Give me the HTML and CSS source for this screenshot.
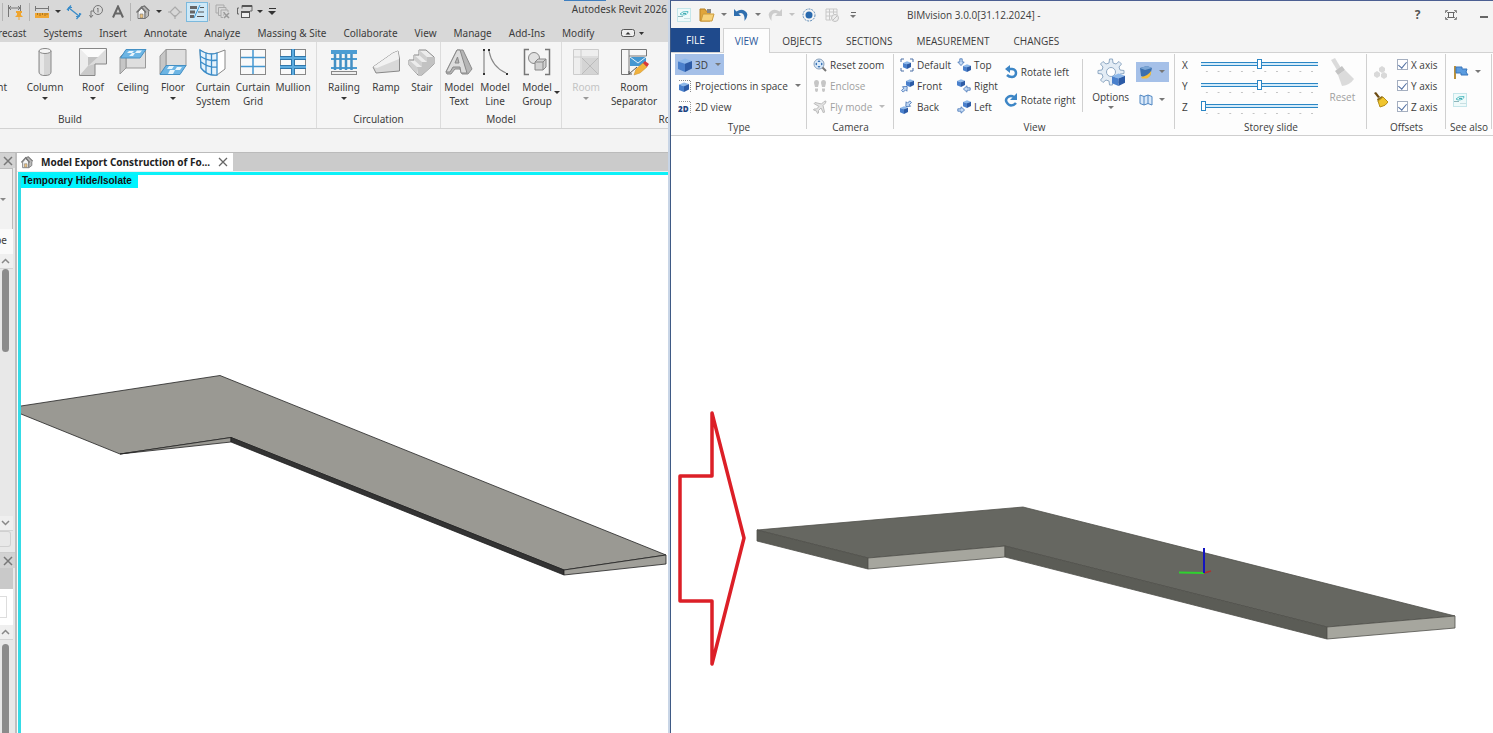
FILE: index.html
```html
<!DOCTYPE html>
<html lang="en">
<head>
    <meta charset="UTF-8">
    <meta name="viewport" content="width=device-width, initial-scale=1.0">
    <title>Revit to BIMvision</title>
    <link rel="stylesheet" href="styles.css">
</head>
<body>
    <svg class="defs" aria-hidden="true">
        <symbol id="cube" viewBox="0 0 12 12">
            <path d="M0 3L6 0.500L12 2.500L6 5Z" fill="#8db8ea"/>
            <path d="M0 3L6 5V12L0 9.500Z" fill="#4a80cc"/>
            <path d="M12 2.500L6 5V12L12 9Z" fill="#2c5ba6"/>
        </symbol>
        <symbol id="arr" viewBox="0 0 10 10">
            <path d="M1 3.500H5V1L9.500 5L5 9V6.500H1Z" fill="#c4daf5" stroke="#4473b5"/>
        </symbol>
        <symbol id="broom" viewBox="0 0 24 28">
            <path d="M1 2L5 0L11 10L7 12Z" fill="currentColor" opacity="0.600"/>
            <path d="M5 13L12 8L15 12L8 17Z" fill="currentColor"/>
            <path d="M8 17L15 12L24 21Q20 27 12 28Z" fill="currentColor" opacity="0.600"/>
        </symbol>
        <symbol id="logo" viewBox="0 0 14 14">
            <rect x="0.500" y="0.500" width="13" height="13" fill="#effafa" stroke="#c5e6ea"/>
            <path d="M3 6Q5 3 11 3.500Q11 7 5 7Z" fill="none" stroke="#59c0c6"/>
            <path d="M1 8.500H6" stroke="#8fb5ba"/>
            <path d="M7 10.500H13" stroke="#c9dfe2"/>
            <path d="M6 5.500H9" stroke="#4ba9b0"/>
        </symbol>
        <symbol id="house" viewBox="0 0 16 16">
            <path d="M3 8V14.500H10V8L6.500 4Z" fill="#f4f4f4" stroke="#777"/>
            <path d="M10 14.500L13.500 12V7L10 8Z" fill="#bbb" stroke="#777"/>
            <path d="M6.500 3L9.500 2L14.500 7L11 8.500Z" fill="#b5b5b5"/>
            <path d="M1.500 8.500L6.500 3L11 8.500M6.500 3L9.500 2L14.500 7" fill="none" stroke="#707070" stroke-width="1.200"/>
            <path d="M5 14V10H8V14Z" fill="#eec37e" stroke="#777" stroke-width="0.600"/>
        </symbol>
    </svg>

    <main class="screens">
        <!-- Revit -->
        <section class="revit">
            <header class="revit-title">
                <div class="qat">
                    <span class="sep"></span>
                    <button class="tool spaced" aria-label="Align dimension"><svg width="16" height="16" viewBox="0 0 16 16"><path d="M1.500 1V13M13.500 1V7M2 4H13M4 2L2 4L4 6M11 2L13 4L11 6" fill="none" stroke="#777"/><path d="M9 7H15V9H14V11L16 13H8L10 11V9H9ZM11.500 13H12.500V16H11.500Z" fill="#efa52f"/></svg></button>
                    <span class="sep"></span>
                    <button class="tool" aria-label="Measure"><svg width="16" height="14" viewBox="0 0 16 14"><path d="M1 3.500H15M1.500 1V6M14.500 1V6" stroke="#777"/><rect x="1" y="8" width="14" height="5" fill="#f0a632"/><path d="M3.500 8V10M6 8V11M8.500 8V10M11 8V11M13 8V10" stroke="#a8751f"/></svg></button>
                    <button class="drop" aria-label="Measure options"></button>
                    <button class="tool" aria-label="Aligned dimension"><svg width="16" height="16" viewBox="0 0 16 16"><path d="M3 4L13 12M1 6L5 1.500M10.500 15L15 9.500" stroke="#3a8cc9" stroke-width="1.300"/><path d="M2.500 3.500H6M2.500 3.500V7M13.500 12.500H10M13.500 12.500V9" stroke="#3a8cc9"/></svg></button>
                    <button class="tool" aria-label="Tag by category"><svg width="16" height="16" viewBox="0 0 16 16"><circle cx="10" cy="6" r="4.500" fill="none" stroke="#777"/><path d="M9 5L10 4V8.500M6 7H3V13M1.500 11L3 13.500L5 11" fill="none" stroke="#777"/></svg></button>
                    <button class="tool" aria-label="Text"><svg width="12" height="14" viewBox="0 0 12 14"><path d="M1 12.500L6 1.500L11 12.500M3 8.500H9" fill="none" stroke="#666" stroke-width="2"/></svg></button>
                    <span class="sep"></span>
                    <button class="tool" aria-label="Default 3D view"><svg width="16" height="16"><use href="#house"/></svg></button>
                    <button class="drop" aria-label="3D view options"></button>
                    <button class="tool" aria-label="Section"><svg width="14" height="14" viewBox="0 0 14 14"><path d="M7 2L12 7L7 12L2 7ZM0 7H2M12 7H14M7 10V14" fill="none" stroke="#aaa" stroke-width="1.200"/></svg></button>
                    <button class="tool active" aria-label="Thin lines"><svg width="16" height="14" viewBox="0 0 16 14"><path d="M1 2.500H8M1 7H6M1 11.500H5" stroke="#666" stroke-width="3"/><path d="M11 2.500H15M9 7H15M8 11.500H15" stroke="#555"/><path d="M5 13L11 0" stroke="#3a9ad9"/></svg></button>
                    <span class="sep"></span>
                    <button class="tool" aria-label="Close inactive views"><svg width="15" height="15" viewBox="0 0 15 15"><path d="M9 3V1H1V9H3M11 6V3.500H3.500V11.500H6M8 13.500H6V6H13V8M8 8.500H10M8 11H9" fill="none" stroke="#aaa"/><path d="M9 9L14 14M14 9L9 14" stroke="#999" stroke-width="1.500"/></svg></button>
                    <button class="tool" aria-label="Switch windows"><svg width="17" height="16" viewBox="0 0 17 16"><path d="M6 4.500V1.500H16V7H14M3 4H1.500V10H3" fill="none" stroke="#666"/><path d="M6 2H16" stroke="#555" stroke-width="2"/><rect x="5.500" y="7.500" width="8" height="6" fill="#eee" stroke="#555"/><path d="M5 8H14" stroke="#555" stroke-width="2"/></svg></button>
                    <button class="drop" aria-label="Windows list"></button>
                    <button class="drop custom" aria-label="Customize toolbar"></button>
                </div>
                <span class="revit-name">Autodesk Revit 2026</span>
            </header>
            <nav class="revit-tabs">
                <a href="#">Precast</a>
                <a href="#">Systems</a>
                <a href="#">Insert</a>
                <a href="#">Annotate</a>
                <a href="#">Analyze</a>
                <a href="#">Massing &amp; Site</a>
                <a href="#">Collaborate</a>
                <a href="#">View</a>
                <a href="#">Manage</a>
                <a href="#">Add-Ins</a>
                <a href="#">Modify</a>
                <button class="minimize" aria-label="Minimize ribbon"><svg width="24" height="9" viewBox="0 0 24 9"><rect x="0.500" y="0.500" width="13" height="7" rx="2" fill="#eee" stroke="#555"/><path d="M4.500 5.500L7 3L9.500 5.500Z" fill="#333"/><path d="M18 3H23L20.500 6Z" fill="#333"/></svg></button>
            </nav>

            <div class="revit-ribbon">
                <div class="panel">
                    <div class="panel-tools">
                        <button class="big stub">nt</button>
                        <button class="big wide has-drop"><svg width="32" height="32" viewBox="0 0 32 32"><path d="M10 5V26Q10 29.500 16 29.500T22 26V5" fill="#d4d4d4" stroke="#888"/><path d="M11 6H15V29Q11 28 11 26Z" fill="#e8e8e8"/><ellipse cx="16" cy="5" rx="6" ry="2.500" fill="#f5f5f5" stroke="#888"/></svg>Column</button>
                        <button class="big has-drop"><svg width="32" height="32" viewBox="0 0 32 32"><path d="M2.500 2.500H29.500V18H18V29.500H2.500Z" fill="#dcdcdc"/><path d="M3 3L11 11V20L3 29Z" fill="#ececec"/><path d="M11 11H21L11 20Z" fill="#c2c2c2"/><path d="M11 20L18 18V29H3Z" fill="#c9c9c9"/><path d="M3 3H29L21 11H11Z" fill="#fbfbfb"/><path d="M2.500 2.500H29.500V18H18V29.500H2.500Z" fill="none" stroke="#888"/></svg>Roof</button>
                        <button class="big"><svg width="32" height="32" viewBox="0 0 32 32"><path d="M9 4H28.500V22H9Z" fill="#dedede" stroke="#999"/><path d="M3 11L9 5V22L3 28Z" fill="#c6c6c6" stroke="#999"/><path d="M9 3.500H29L23 12H3.500Z" fill="#6db5e4" stroke="#4490c4"/><path d="M12 5H17L15 7H10ZM20 4.500H25L23 7H18ZM15 7H18L16 10H12Z" fill="#e9f5fc"/></svg>Ceiling</button>
                        <button class="big has-drop"><svg width="32" height="32" viewBox="0 0 32 32"><path d="M9 3.500H29V20H9Z" fill="#dedede" stroke="#999"/><path d="M9 3.500L3 10V28L9 20Z" fill="#c6c6c6" stroke="#999"/><path d="M9 19.500H29L23 28.500H3Z" fill="#6db5e4" stroke="#4490c4"/><path d="M12 20H17L15 23H10ZM20 21H25L23 24H18ZM13 24H18L16 28H11Z" fill="#e9f5fc"/></svg>Floor</button>
                        <button class="big"><svg width="32" height="32" viewBox="0 0 32 32"><path d="M3 4Q12 10 20 7L28 4V23L20 29Q10 30 4 22Z" fill="#fff" stroke="#888"/><path d="M3 4Q12 10 20 7V29Q10 30 4 22Z" fill="#e5f2fb"/><path d="M3 4Q12 10 20 7V29Q10 30 4 22ZM3 10Q12 16 20 14M4 16Q12 22 20 21M9 7V26M14.500 8V28.500" fill="none" stroke="#3a8cc9" stroke-width="1.300"/></svg>Curtain
System</button>
                        <button class="big"><svg width="32" height="32" viewBox="0 0 32 32"><rect x="3.500" y="3.500" width="25" height="25" fill="#f9f9f9" stroke="#888"/><path d="M4 11.500H28M4 20.500H28M16 4V28" stroke="#4497d1" stroke-width="1.500"/></svg>Curtain
Grid</button>
                        <button class="big"><svg width="32" height="32" viewBox="0 0 32 32"><rect x="3.500" y="3.500" width="25" height="25" fill="#f9f9f9" stroke="#888"/><path d="M3 12H29M3 21H29M16 3V29" stroke="#2f77ac" stroke-width="4"/><path d="M3 12H29M3 21H29M16 3V29" stroke="#5eacdf" stroke-width="2"/></svg>Mullion</button>
                    </div>
                    <div class="panel-name build-name">Build</div>
                </div>
                <div class="panel">
                    <div class="panel-tools padded">
                        <button class="big mid has-drop"><svg width="32" height="32" viewBox="0 0 32 32"><path d="M3 4H29V8H3ZM3 12H29V14H3ZM3 21H29V23H3Z" fill="#4d9dd3"/><path d="M7 8V24M12.500 8V24M18 8V24M23.500 8V24" stroke="#4490c4" stroke-width="2.500"/><rect x="3.500" y="25.500" width="25" height="3" fill="#eee" stroke="#888"/></svg>Railing</button>
                        <button class="big slim"><svg width="32" height="32" viewBox="0 0 32 32"><path d="M3 21L23 7L28 5L29.500 13V25L6 27Z" fill="#d8d8d8" stroke="#888"/><path d="M3 21L23 7L28 5L29 13L7 22Z" fill="#f2f2f2"/></svg>Ramp</button>
                        <button class="big slim"><svg width="32" height="32" viewBox="0 0 32 32"><path d="M3 14H8V9H13V4H20L28 11V18L16 29H12L3 19Z" fill="#ececec" stroke="#888"/><path d="M3 14L11 21V28L3 19ZM8 9L16 16V21L8 14ZM13 4L21 11V16L13 9Z" fill="#cfcfcf"/><path d="M11 21H16V16H21V11H28V18L16 29H12Z" fill="#c2c2c2"/></svg>Stair</button>
                    </div>
                    <div class="panel-name">Circulation</div>
                </div>
                <div class="panel">
                    <div class="panel-tools">
                        <button class="big slim"><svg width="32" height="32" viewBox="0 0 32 32"><path d="M3 26L14 4H20L29 23L25 28H19L17 23H12L8 28H4Z" fill="#b5b5b5" stroke="#8c8c8c"/><path d="M3 26L14 4H17L24 27H18L17 21H10L7 26ZM12 17H16L14.500 11Z" fill="#dcdcdc" stroke="#888" fill-rule="evenodd"/></svg>Model
Text</button>
                        <button class="big slim"><svg width="32" height="32" viewBox="0 0 32 32"><path d="M5 5V27M10 5Q13 21 27 27" fill="none" stroke="#888" stroke-width="1.200"/><path d="M4 3H6V5H4ZM4 27H6V29H4ZM9 3H11V5H9ZM27 27H29V29H27Z" fill="#333"/></svg>Model
Line</button>
                        <button class="big mid side-drop"><svg width="32" height="32" viewBox="0 0 32 32"><path d="M8 3.500H3.500V28.500H8M24 3.500H28.500V28.500H24" fill="none" stroke="#777" stroke-width="1.500"/><circle cx="13" cy="12" r="5.500" fill="#e2e2e2" stroke="#888"/><path d="M14 16L17 13H25V21L22 24H14Z" fill="#d2d2d2" stroke="#888"/><path d="M14 16H22V24M22 16L25 13" fill="none" stroke="#888"/></svg>Model
Group</button>
                    </div>
                    <div class="panel-name">Model</div>
                </div>
                <div class="panel room-panel">
                    <div class="panel-tools">
                        <button class="big mid has-drop" disabled><svg width="32" height="32" viewBox="0 0 32 32"><path d="M3.500 3.500H28.500V28.500H3.500ZM11 4V28M4 11H28" fill="#eee" stroke="#ccc"/><path d="M12 12H28V28H12Z" fill="#d4d4d4"/><path d="M12 12L28 28M28 12L12 28" stroke="#bbb"/></svg>Room</button>
                        <button class="big mid"><svg width="32" height="32" viewBox="0 0 32 32"><path d="M3.500 3.500H28.500V10H11V28.500H3.500Z" fill="#f7f7f7" stroke="#777"/><path d="M11 4V10" stroke="#777"/><path d="M12 11H28V20H12Z" fill="#4497d1"/><path d="M12 11L20 17L28 11" fill="none" stroke="#e4f2fb"/><path d="M11 28L19 21M11 28V25M11 28H14" stroke="#555"/><path d="M16 29L18 23L25 17L29 21L22 27Z" fill="#f1b23c" stroke="#c98f2b" stroke-width="0.500"/><path d="M25 17L27 15L31 18L29 21Z" fill="#da3636"/></svg>Room
Separator</button>
                    </div>
                    <div class="panel-name">Room &amp; Area</div>
                </div>
            </div>
            <div class="options-bar"></div>

            <div class="workspace">
                <aside class="dock">
                    <div class="dock-head"><button aria-label="Close properties"><svg width="10" height="10" viewBox="0 0 10 10"><path d="M1 1L9 9M9 1L1 9" stroke="#777" stroke-width="1.500"/></svg></button></div>
                    <div class="type-box"><button class="drop" aria-label="Type selector"></button></div>
                    <div class="type-edit">pe</div>
                    <button class="scroll-btn" aria-label="Scroll up"><svg width="9" height="6" viewBox="0 0 9 6"><path d="M1 5L4.500 1.500L8 5" fill="none" stroke="#888" stroke-width="1.500"/></svg></button>
                    <div class="track"><div class="thumb short"></div></div>
                    <button class="scroll-btn" aria-label="Scroll down"><svg width="9" height="6" viewBox="0 0 9 6"><path d="M1 1L4.500 4.500L8 1" fill="none" stroke="#888" stroke-width="1.500"/></svg></button>
                    <div class="apply"><span></span></div>
                    <div class="dock-head"><button aria-label="Close browser"><svg width="10" height="10" viewBox="0 0 10 10"><path d="M1 1L9 9M9 1L1 9" stroke="#777" stroke-width="1.500"/></svg></button></div>
                    <div class="browser-bar"></div>
                    <div class="search"><input type="text" aria-label="Search"></div>
                    <button class="scroll-btn" aria-label="Scroll up"><svg width="9" height="6" viewBox="0 0 9 6"><path d="M1 5L4.500 1.500L8 5" fill="none" stroke="#888" stroke-width="1.500"/></svg></button>
                    <div class="track low"><div class="thumb"></div></div>
                </aside>
                <div class="views">
                    <div class="doc-tabs">
                        <div class="doc-tab">
                            <svg width="14" height="14" viewBox="0 0 16 16"><use href="#house" width="16" height="16"/></svg>
                            <span>Model Export Construction of Fo...</span>
                            <button aria-label="Close tab"><svg width="10" height="10" viewBox="0 0 10 10"><path d="M1 1L9 9M9 1L1 9" stroke="#666" stroke-width="1.300"/></svg></button>
                        </div>
                    </div>
                    <div class="view">
                        <span class="hide-label">Temporary Hide/Isolate</span>
                        <svg class="scene" viewBox="21 175 647 558">
                            <g stroke="#222" stroke-width="0.800" stroke-linejoin="round">
                                <path d="M21 406L220 375.500L666 555L564 570L231 437.500L120 454L21 414" fill="#9a9993"/>
                                <path d="M120 454L231 437.500V442Z" fill="#9a9993"/>
                                <path d="M231 437.500L564 570V575L231 442Z" fill="#333"/>
                                <path d="M564 570L666 555V564L564 575Z" fill="#a09f99"/>
                            </g>
                        </svg>
                    </div>
                </div>
            </div>
        </section>

        <!-- BIMvision -->
        <section class="bim">
            <header class="bim-title">
                <div class="bim-qat">
                    <button class="tool" aria-label="BIMvision"><svg width="14" height="14"><use href="#logo"/></svg></button>
                    <button class="tool" aria-label="Open"><svg width="16" height="16" viewBox="0 0 16 16"><path d="M1 14V2H6L7 4H11V14Z" fill="#e0a53a" stroke="#b88227"/><path d="M8 2H12V6H8Z" fill="#888"/><path d="M4 7H15L13 14H2Z" fill="#f7d27a" stroke="#cc9a3b"/></svg></button>
                    <button class="drop" aria-label="Recent files"></button>
                    <button class="tool" aria-label="Undo"><svg width="16" height="14" viewBox="0 0 16 14"><path d="M1 1V8H8L5.500 5.500Q12 3 11.500 13Q17 6 12 3Q8 0.500 3.500 3.500Z" fill="#2f6eae"/></svg></button>
                    <button class="drop" aria-label="Undo list"></button>
                    <button class="tool" aria-label="Redo" disabled><svg width="16" height="14" viewBox="0 0 16 14"><path d="M15 1V8H8L10.500 5.500Q4 3 4.500 13Q-1 6 4 3Q8 0.500 12.500 3.500Z" fill="#ccc"/></svg></button>
                    <button class="drop faint" aria-label="Redo list" disabled></button>
                    <button class="tool" aria-label="Select"><svg width="14" height="14" viewBox="0 0 14 14"><circle cx="7" cy="7" r="6" fill="none" stroke="#5a88b5" stroke-dasharray="2 1"/><circle cx="7" cy="7" r="3.500" fill="#2969ae"/></svg></button>
                    <button class="tool" aria-label="Table" disabled><svg width="14" height="14" viewBox="0 0 14 14"><path d="M1 1H12V7M6 12H1V1M1 4H12M1 8H7M4.500 1V12M8.500 1V6" fill="none" stroke="#c8c8c8"/><circle cx="10" cy="10" r="3.500" fill="#eee" stroke="#c0c0c0"/><path d="M8 12L12 8" stroke="#c0c0c0"/></svg></button>
                    <button class="drop custom" aria-label="Customize toolbar"></button>
                </div>
                <h1>BIMvision 3.0.0[31.12.2024] -</h1>
                <div class="win-buttons">
                    <button aria-label="Help"><b>?</b></button>
                    <button aria-label="Full screen"><svg width="12" height="10" viewBox="0 0 12 10"><path d="M0.500 3V0.500H3M9 0.500H11.500V3M11.500 7V9.500H9M3 9.500H0.500V7M1 1L3 3M11 1L9 3M11 9L9 7M1 9L3 7" fill="none" stroke="#888"/><rect x="3.500" y="2.500" width="5" height="5" fill="none" stroke="#666"/></svg></button>
                    <button aria-label="Minimize"><svg width="8" height="10" viewBox="0 0 8 10"><path d="M0 7H8" stroke="#666" stroke-width="2"/></svg></button>
                </div>
            </header>
            <nav class="bim-tabs">
                <a class="file" href="#">FILE</a>
                <a class="current" href="#">VIEW</a>
                <a href="#">OBJECTS</a>
                <a href="#">SECTIONS</a>
                <a href="#">MEASUREMENT</a>
                <a href="#">CHANGES</a>
            </nav>

            <div class="bim-ribbon">
                <div class="group type">
                    <div class="tools">
                        <div class="rows">
                            <button class="cmd on"><svg width="14" height="14"><use href="#cube"/></svg>3D<i class="caret"></i></button>
                            <button class="cmd"><svg width="14" height="14" viewBox="0 0 14 14"><path d="M1 1.500H13M12.500 2V14" stroke="#888" stroke-dasharray="1 1"/><use href="#cube" x="1" y="3" width="10" height="10"/></svg>Projections in space<i class="caret"></i></button>
                            <button class="cmd"><svg width="14" height="14" viewBox="0 0 14 14"><path d="M1 1.500H13M12.500 2V14" stroke="#999" stroke-dasharray="1 1"/><text x="0" y="12" font-size="8" font-weight="800" fill="#1f4583">2D</text></svg>2D view</button>
                        </div>
                    </div>
                    <div class="group-name">Type</div>
                </div>
                <div class="group camera">
                    <div class="tools">
                        <div class="rows">
                            <button class="cmd"><svg width="14" height="14" viewBox="0 0 14 14"><circle cx="6" cy="6" r="5" fill="#d9e9f8" stroke="#8aa0ba"/><path d="M6 2L7.500 4H4.500ZM6 10L7.500 8H4.500ZM2 6L4 4.500V7.500ZM10 6L8 4.500V7.500Z" fill="#356fb5"/><path d="M9.500 9.500L13 13" stroke="#777" stroke-width="2"/></svg>Reset zoom</button>
                            <button class="cmd" disabled><svg width="14" height="14" viewBox="0 0 14 14"><path d="M1 4Q1 1 3.500 1T6 4L5 8H2ZM8 4Q8 1 10.500 1T13 4L12 8H9ZM2 9.500H5V11Q5 13 3.500 13T2 11ZM9 9.500H12V11Q12 13 10.500 13T9 11Z" fill="#c6c6c6"/></svg>Enclose</button>
                            <button class="cmd" disabled><svg width="14" height="14" viewBox="0 0 14 14"><path d="M13 1L11 1.500L8.500 4L2 2.500L1 3.500L6 6.500L3.500 9H1L0.500 10L3.500 11L4.500 13.500L5.500 13V10.500L8 8L10.500 13L11.500 12L10 5.500L12.500 3Z" fill="#e4e4e4" stroke="#bbb"/></svg>Fly mode<i class="caret"></i></button>
                        </div>
                    </div>
                    <div class="group-name">Camera</div>
                </div>
                <div class="group view-group">
                    <div class="tools">
                        <div class="rows">
                            <button class="cmd"><svg width="14" height="14" viewBox="0 0 14 14"><path d="M1 4V1H4M10 1H13V4M13 10V13H10M4 13H1V10" fill="none" stroke="#4a6fa5"/><use href="#cube" x="3" y="3" width="8" height="8"/></svg>Default</button>
                            <button class="cmd"><svg width="14" height="14" viewBox="0 0 14 14"><use href="#cube" x="6" y="0" width="8" height="8"/><use href="#arr" width="8" height="8" transform="translate(-1 10) rotate(-45)"/></svg>Front</button>
                            <button class="cmd"><svg width="14" height="14" viewBox="0 0 14 14"><use href="#cube" x="0" y="6" width="8" height="8"/><use href="#arr" width="8" height="8" transform="translate(14 4) rotate(135)"/></svg>Back</button>
                        </div>
                        <div class="rows">
                            <button class="cmd"><svg width="14" height="14" viewBox="0 0 14 14"><use href="#cube" x="6" y="6" width="8" height="8"/><use href="#arr" width="8" height="8" transform="translate(8 0) rotate(90)"/></svg>Top</button>
                            <button class="cmd"><svg width="14" height="14" viewBox="0 0 14 14"><use href="#cube" x="0" y="0" width="8" height="8"/><use href="#arr" width="8" height="8" transform="translate(14 14) rotate(180)"/></svg>Right</button>
                            <button class="cmd"><svg width="14" height="14" viewBox="0 0 14 14"><use href="#cube" x="6" y="0" width="8" height="8"/><use href="#arr" x="0" y="6" width="8" height="8"/></svg>Left</button>
                        </div>
                        <div class="rows pair rotates">
                            <button class="cmd"><svg width="14" height="14" viewBox="0 0 14 14"><path d="M3 4H8Q12 4.500 12 8T8 12Q5 12 3 10" fill="none" stroke="#3d86c6" stroke-width="2.500"/><path d="M6 0V8L1 4Z" fill="#3d86c6"/></svg>Rotate left</button>
                            <button class="cmd"><svg width="14" height="14" viewBox="0 0 14 14"><path d="M10 4Q7 2 4 4T2.500 9T7 12.500Q10 12.500 12 10" fill="none" stroke="#3d86c6" stroke-width="2.500"/><path d="M13 0V7H6Z" fill="#3d86c6"/></svg>Rotate right</button>
                        </div>
                        <span class="rule"></span>
                        <button class="options"><svg width="28" height="28" viewBox="0 0 28 28"><path d="M12.500 1H15.500L16 5L19 6L22 3.500L24.500 6L22 9L23 12L27 12.500V15.500L23 16L22 19L24.500 22L22 24.500L19 22L16 23L15.500 27H12.500L12 23L9 22L6 24.500L3.500 22L6 19L5 16L1 15.500V12.500L5 12L6 9L3.500 6L6 3.500L9 6L12 5Z" fill="#e3ecf5" stroke="#8fa9c4"/><circle cx="14" cy="14" r="4.500" fill="#fff" stroke="#8fa9c4"/><use href="#cube" x="15" y="15" width="13" height="13"/></svg>Options<i class="caret"></i></button>
                        <div class="rows pair">
                            <button class="cmd on icon-cmd" aria-label="Shading"><svg width="14" height="14" viewBox="0 0 14 14"><path d="M1 3L8 1L13 3L11 11L6 13L2 11Z" fill="#3a6fae"/><path d="M1 3L8 1L13 3L6 5Z" fill="#7ba5d4"/><path d="M2 12Q9 11 12 6Q13 11 8 13.500H3Z" fill="#f2bd3c"/></svg><i class="caret"></i></button>
                            <button class="cmd icon-cmd" aria-label="Map"><svg width="14" height="12" viewBox="0 0 14 12"><path d="M1 1L5 2.500L9 1L13 2.500V11L9 9.500L5 11L1 9.500ZM5 2.500V11M9 1V9.500" fill="#dceafa" stroke="#4f86c2"/></svg><i class="caret"></i></button>
                        </div>
                    </div>
                    <div class="group-name">View</div>
                </div>
                <div class="group storey">
                    <div class="tools">
                        <div class="rows sliders">
                            <div class="slide"><label for="sx">X</label><span><input id="sx" type="range" min="0" max="100" value="50"></span></div>
                            <div class="slide"><label for="sy">Y</label><span><input id="sy" type="range" min="0" max="100" value="50"></span></div>
                            <div class="slide"><label for="sz">Z</label><span><input id="sz" type="range" min="0" max="100" value="0"></span></div>
                        </div>
                        <button class="options" disabled><svg class="faded" width="24" height="28"><use href="#broom"/></svg>Reset</button>
                    </div>
                    <div class="group-name">Storey slide</div>
                </div>
                <div class="group offsets">
                    <div class="tools">
                        <div class="rows pair">
                            <button class="cmd" aria-label="Explode" disabled><svg width="14" height="14" viewBox="0 0 14 14"><path d="M5 3L8 1L11 3V6L8 8L5 6ZM0 8L3 6L6 8V11L3 13L0 11ZM7 9L10 7L13 9V12L10 14L7 12Z" fill="#d9d9d9"/></svg></button>
                            <button class="cmd" aria-label="Clear offsets"><svg width="14" height="16" viewBox="0 0 14 16"><path d="M0 1L2 0L6 5L4 6Z" fill="#6b4a12"/><path d="M3 7L8 4L10 6L4 10Z" fill="#8a6a1a"/><path d="M4 9L9 5L14 10Q12 14 6 15Z" fill="#f0c52e" stroke="#b58f1c"/></svg></button>
                        </div>
                        <div class="rows checks">
                            <label class="check"><input type="checkbox" checked>X axis</label>
                            <label class="check"><input type="checkbox" checked>Y axis</label>
                            <label class="check"><input type="checkbox" checked>Z axis</label>
                        </div>
                    </div>
                    <div class="group-name">Offsets</div>
                </div>
                <div class="group also">
                    <div class="tools">
                        <div class="rows pair">
                            <button class="cmd icon-cmd" aria-label="Language"><svg width="16" height="14" viewBox="0 0 16 14"><path d="M1 1H3V14H1Z" fill="#b9903b"/><path d="M3 2H9V4H14L13 7L15 10H8V8H3Z" fill="#5b9ce0" stroke="#3a76bb"/></svg><i class="caret"></i></button>
                            <button class="cmd" aria-label="Website"><svg width="14" height="14"><use href="#logo"/></svg></button>
                        </div>
                    </div>
                    <div class="group-name">See also</div>
                </div>
            </div>

            <div class="canvas">
                <svg class="scene" viewBox="671 136 822 597">
                    <g stroke="#50514b" stroke-width="0.800" stroke-linejoin="round">
                        <path d="M757 530L1023 507L1455 616L1327 627L1005 546L868 558Z" fill="#666761"/>
                        <path d="M757 530L868 558V569L757 541Z" fill="#5b5c56"/>
                        <path d="M868 558L1005 546V557L868 569Z" fill="#a6a69e"/>
                        <path d="M1005 546L1327 627V639L1005 557Z" fill="#5b5c56"/>
                        <path d="M1327 627L1455 616V628L1327 639Z" fill="#a6a69e"/>
                    </g>
                    <g stroke-width="2">
                        <path d="M1204 573L1211 571" stroke="#b03030" stroke-width="1.500"/>
                        <path d="M1179 572.500L1204 573" stroke="#2fd12f"/>
                        <path d="M1204 548V573" stroke="#1414c0"/>
                    </g>
                    <path d="M680 476H712V413L744 538L712 664V601H680Z" fill="none" stroke="#dc1f27" stroke-width="3.500" stroke-linejoin="round"/>
                </svg>
            </div>
        </section>
    </main>
</body>
</html>
```
FILE: styles.css
```css
* { box-sizing: border-box; }
body { margin: 0; font-family: "Noto Sans", "Open Sans", sans-serif; font-size: 10px; line-height: 14px; color: #3c3c3c; background: white; }
button { font: inherit; color: inherit; background: none; border: none; padding: 0; margin: 0; white-space: pre; }
a { color: inherit; text-decoration: none; white-space: nowrap; }
svg { display: block; flex-shrink: 0; }
.defs { position: absolute; width: 0; height: 0; }
.screens { display: grid; grid-template-columns: 670fr 823fr; height: 100vh; overflow: hidden; }
.scene { width: 100%; height: 100%; }

/* shared small toolbar buttons */
.tool { width: 22px; height: 20px; display: flex; justify-content: center; align-items: center; flex-shrink: 0; }
.drop { width: 10px; height: 20px; display: flex; justify-content: center; align-items: center; flex-shrink: 0; }
.drop::before { content: ""; border: 3px solid transparent; border-top-color: #333; border-bottom: none; }
.custom { flex-direction: column; }
.custom::before { order: 2; border-width: 4px; }
.custom::after { content: ""; width: 7px; height: 1px; margin-bottom: 2px; background: #333; }
.sep { width: 1px; height: 18px; margin: 0 1px; background: #b5b5b5; flex-shrink: 0; }
.spaced { margin-right: 2px; }

/* Revit */
.revit { display: flex; flex-direction: column; min-width: 0; overflow: hidden; border-right: 2px solid #c8d5e6; }
.revit-title { height: 24px; display: flex; justify-content: space-between; background: linear-gradient(#3f7fc0, #3f7fc0) calc(100% - 62px) 0 / 42px 1px no-repeat, #d8d8d8; flex-shrink: 0; }
.qat { height: 23px; display: flex; align-items: center; padding-left: 1px; }
.active { background: #cde8f7; border: 1px solid #7cb9dd; }
.qat .custom { margin-left: 2px; }
.revit-name { padding: 2px 1px 0 3px; white-space: nowrap; }
.revit-tabs { height: 18px; display: flex; gap: 17px; background: #d8d8d8; flex-shrink: 0; line-height: 18px; }
.revit-tabs a:first-child { margin-left: -8px; }
.minimize { margin-left: 10px; display: flex; align-items: center; }
.revit-ribbon { height: 87px; display: flex; background: #f5f5f5; border-bottom: 1px solid #d2d2d2; flex-shrink: 0; }
.panel { display: flex; flex-direction: column; justify-content: space-between; border-right: 1px solid #dcdcdc; flex-shrink: 0; }
.panel:first-child { padding-right: 3px; }
.panel-tools { display: flex; padding-top: 4px; }
.padded { padding-left: 3px; }
.panel-name { text-align: center; padding-bottom: 1px; line-height: 16px; }
.build-name { width: 140px; }
.big { width: 40px; display: flex; flex-direction: column; align-items: center; justify-content: flex-start; text-align: center; position: relative; flex-shrink: 0; }
.big svg { margin-bottom: 2px; }
.wide { width: 56px; }
.mid { width: 48px; }
.slim { width: 36px; }
.stub { width: 17px; padding: 34px 10px 0 0; align-items: flex-end; }
.has-drop::after, .side-drop::after { content: ""; border: 3px solid transparent; border-top-color: #333; border-bottom: none; margin-top: 3px; }
.side-drop::after { position: absolute; right: 1px; top: 42px; }
.big:disabled { color: #c4c4c4; }
.big:disabled::after { border-top-color: #999; }
.room-panel { width: 256px; }
.options-bar { height: 23px; background: #f3f3f3; flex-shrink: 0; }
.workspace { flex: 1; display: flex; min-height: 0; border-top: 1px solid #bbb; }

/* left dock */
.dock { width: 17px; display: flex; flex-direction: column; background: #e8e8e8; border-right: 2px solid #bfbfbf; flex-shrink: 0; }
.dock-head { height: 15px; display: flex; justify-content: flex-end; align-items: center; padding-right: 2px; background: #d2d2d2; flex-shrink: 0; }
.type-box { height: 61px; width: 13px; background: #f2f2f2; border-top: 1px solid #bbb; border-right: 1px solid #bbb; display: flex; align-items: center; flex-shrink: 0; }
.type-box .drop { width: 6px; }
.type-box .drop::before { border-top-color: #888; }
.type-edit { height: 25px; width: 13px; display: flex; justify-content: flex-end; padding: 4px 6px 0 0; background: #fafafa; flex-shrink: 0; }
.scroll-btn { height: 15px; width: 13px; display: flex; justify-content: center; align-items: center; padding-right: 2px; background: #efefef; border-bottom: 1px solid #d5d5d5; flex-shrink: 0; }
.track { height: 247px; padding-left: 2px; flex-shrink: 0; }
.thumb { width: 7px; height: 100%; background: #8b8b8b; border-radius: 4px; }
.short { height: 83px; }
.apply { height: 22px; border-bottom: 1px solid #ccc; flex-shrink: 0; }
.apply span { display: block; width: 11px; height: 16px; border: 1px solid #d0d0d0; border-left: none; border-radius: 0 3px 3px 0; }
.browser-bar { height: 21px; width: 13px; background: #c9c9c9; flex-shrink: 0; }
.search { height: 36px; width: 13px; padding: 7px 6px 7px 0; background: white; flex-shrink: 0; }
.search input { display: block; width: 100%; height: 22px; padding: 0; border: 1px solid #ddd; border-left: none; background: white; }
.low { flex: 1; padding-top: 4px; overflow: hidden; }
.low .thumb { border-radius: 4px 4px 0 0; }

.views { flex: 1; display: flex; flex-direction: column; min-width: 0; }
.doc-tabs { height: 19px; display: flex; background: #cbcbcb; border-bottom: 1px solid #eee; flex-shrink: 0; }
.doc-tab { display: flex; align-items: center; gap: 7px; padding: 0 5px 0 3px; background: white; font-weight: bold; color: #222; white-space: nowrap; }
.doc-tab button { margin-left: 1px; }
.view { flex: 1; position: relative; min-height: 0; margin-left: 1px; border-left: 3px solid #35dbe6; border-top: 3px solid #0cf1f8; background: white; }
.hide-label { position: absolute; left: 0; top: -1px; padding: 0 6px 0 1px; background: #00f4ff; color: #111; font: bold 10px/14px "Liberation Sans", Arial, sans-serif; white-space: nowrap; }

/* BIMvision */
.bim { display: flex; flex-direction: column; min-width: 0; overflow: hidden; border-left: 1px solid #3f5a85; border-top: 1px solid #4c5f92; font-family: "Open Sans", "Noto Sans", sans-serif; }
.bim-title { height: 27px; display: flex; align-items: center; background: #f4f4f4; flex-shrink: 0; }
.bim-qat { display: flex; gap: 1px; padding-left: 2px; }
.bim-qat .drop::before { border-top-color: #777; }
.bim-qat .custom { width: 18px; }
.bim-qat .custom::before { border-width: 3px; border-bottom: none; }
.bim-qat .custom::after { width: 5px; background: #666; }
.faint { opacity: 0.4; }
.bim-title h1 { margin: 0 0 0 45px; font-size: 10px; font-weight: normal; white-space: nowrap; flex: 1; }
.win-buttons { display: flex; margin-right: -7px; }
.win-buttons button { width: 33px; height: 20px; display: flex; justify-content: center; align-items: center; font-size: 12px; color: #555; }
.bim-tabs { height: 25px; display: flex; background: #f4f4f4; border-bottom: 1px solid #d2d2d2; flex-shrink: 0; }
.bim-tabs a { padding: 0 12px; line-height: 27px; }
.bim-tabs .file { padding: 0 15px; margin-right: 3px; background: #1f4a8c; color: white; line-height: 24px; }
.bim-tabs .current { background: #fdfdfd; color: #2b579a; border: 1px solid #d2d2d2; border-bottom: none; padding: 0 11px; line-height: 25px; height: 25px; }
.bim-ribbon { height: 83px; display: flex; background: #fdfdfd; border-bottom: 1px solid #cfcfcf; flex-shrink: 0; }
.group { display: flex; flex-direction: column; padding-left: 4px; flex-shrink: 0; position: relative; }
.group::after { content: ""; position: absolute; right: 0; top: 1px; bottom: 6px; width: 1px; background: #d0d0d0; }
.tools { display: flex; height: 64px; flex-shrink: 0; padding-top: 1px; }
.rows { display: flex; flex-direction: column; align-items: flex-start; }
.pair { justify-content: center; }
.pair .cmd { height: 28px; }
.pair .on { height: 20px; margin: 4px 0; }
.group-name { text-align: center; line-height: 20px; margin-left: -4px; }
.cmd { height: 21px; display: flex; align-items: center; gap: 3px; padding: 0 3px; }
.on { background: #a5c0e8; }
.cmd:disabled, .options:disabled { color: #a0a0a0; }
.faded { color: #c4c4c4; }
.caret { border: 3px solid transparent; border-top-color: #777; border-bottom: none; margin-left: 4px; }
.cmd:disabled .caret { border-top-color: #bbb; }
.icon-cmd { width: 33px; }
.icon-cmd .caret { margin-left: 3px; }
.type { width: 136px; }
.camera { width: 87px; }
.camera .tools { margin-left: -1px; }
.view-group { width: 281px; }
.view-group .tools { margin-left: -1px; }
.view-group .rows + .rows { margin-left: 0; }
.rule { width: 1px; height: 53px; margin: 5px 3px 0; background: #d0d0d0; }
.options { width: 50px; display: flex; flex-direction: column; align-items: center; padding-top: 4px; }
.options svg { margin-bottom: 4px; }
.options .caret { margin: 2px 0 0; }
.storey { width: 192px; }
.sliders { width: 141px; }
.slide { height: 21px; width: 100%; display: flex; align-items: center; }
.slide label { width: 22px; padding-left: 3px; }
.slide span { flex: 1; height: 17px; padding-top: 3px; background: radial-gradient(circle, #c4c4c4 1px, transparent 1px) 0 100% / 10% 3px repeat-x; }
.slide input { appearance: none; display: block; width: 100%; height: 10px; margin: 0; background: linear-gradient(#2b86c5, #2b86c5) 0 3px / 100% 1px no-repeat, linear-gradient(#2b86c5, #2b86c5) 0 6px / 100% 1px no-repeat, linear-gradient(#d5ecfa, #d5ecfa) 0 4px / 100% 2px no-repeat; }
.slide input::-webkit-slider-thumb { appearance: none; width: 5px; height: 10px; background: white; border: 1px solid #2b86c5; }
.offsets { width: 79px; }
.checks { margin-left: 4px; }
.check { height: 21px; display: flex; align-items: center; gap: 3px; padding-left: 2px; white-space: nowrap; }
.check input { appearance: none; width: 11px; height: 11px; margin: 0; border: 1px solid #a5afc0; background: white; display: flex; justify-content: center; }
.check input:checked::after { content: ""; width: 4px; height: 7px; border: solid #4d6ca0; border-width: 0 1px 1px 0; transform: rotate(40deg); }
.also { width: 46px; }
.canvas { flex: 1; min-height: 0; background: white; }
```
